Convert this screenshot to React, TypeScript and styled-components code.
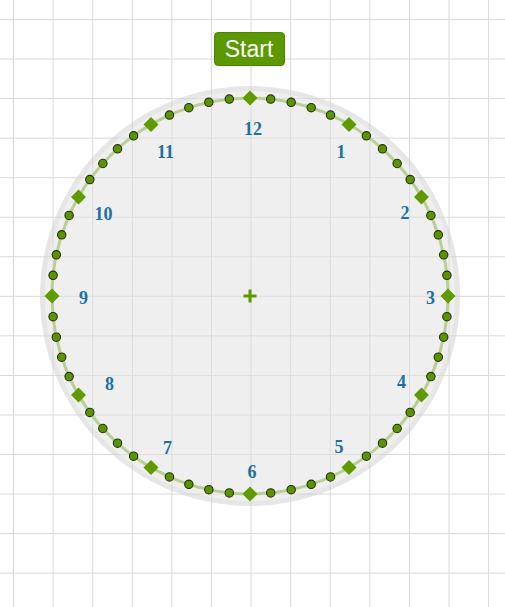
import React from 'react';
import styled, { createGlobalStyle } from 'styled-components';

const SIZE = 430;
const C = SIZE / 2;
const TRACK_R = 198;
const GRID_X = 39.6;
const GRID_Y = 39.55;

// label centres, measured from the clock centre
const LABELS: [number, number, number][] = [
  [12, 3, -167.5],
  [1, 91, -144],
  [2, 155, -83],
  [3, 180.5, 2],
  [4, 151.5, 86],
  [5, 89, 151],
  [6, 2, 175.3],
  [7, -82.5, 152],
  [8, -140.5, 88],
  [9, -166.5, 2],
  [10, -146.5, -82],
  [11, -84.5, -144],
];

const GlobalStyle = createGlobalStyle`
  html, body {
    margin: 0;
    padding: 0;
    background: #ffffff;
    font-family: 'Liberation Sans', Arial, sans-serif;
  }
`;

const polar = (r: number, deg: number) => {
  const a = (deg * Math.PI) / 180;
  return { x: C + r * Math.sin(a), y: C - r * Math.cos(a) };
};

const App = () => {
  const minutes = Array.from({ length: 60 }, (_, i) => i).filter((i) => i % 5 !== 0);
  const hours = Array.from({ length: 12 }, (_, i) => i);

  return (
    <>
      <GlobalStyle />
      <Stage>
        <StartButton type="button">Start</StartButton>
        <ClockFace width={SIZE} height={SIZE} viewBox={`0 0 ${SIZE} ${SIZE}`}>
          <defs>
            <pattern
              id="face-grid"
              patternUnits="userSpaceOnUse"
              x={17.6}
              y={17.1}
              width={GRID_X}
              height={GRID_Y}
            >
              <GridLine x={0} y={0} width={1} height={GRID_Y} />
              <GridLine x={0} y={0} width={GRID_X} height={1} />
            </pattern>
          </defs>
          <Disk cx={C} cy={C} r={210} />
          <circle cx={C} cy={C} r={210} fill="url(#face-grid)" />
          <Rim cx={C} cy={C} r={207.5} />
          <Track cx={C} cy={C} r={TRACK_R} />
          {minutes.map((m) => {
            const p = polar(TRACK_R, m * 6);
            return <MinuteDot key={m} cx={p.x} cy={p.y} r={4.2} />;
          })}
          {hours.map((h) => {
            const p = polar(TRACK_R, h * 30);
            return (
              <HourMarker
                key={h}
                x={p.x - 5.3}
                y={p.y - 5.3}
                width={10.6}
                height={10.6}
                transform={`rotate(45 ${p.x} ${p.y})`}
              />
            );
          })}
          {LABELS.map(([n, dx, dy]) => (
            <HourLabel key={n} x={C + dx} y={C + dy + 6.2}>
              {n}
            </HourLabel>
          ))}
          <CenterMark d={`M ${C - 6.5} ${C} H ${C + 6.5} M ${C} ${C - 6.5} V ${C + 6.5}`} />
        </ClockFace>
      </Stage>
    </>
  );
};

export default App;

const Stage = styled.div`
  box-sizing: border-box;
  width: 100%;
  min-height: 100vh;
  padding: 32px 5px 0 0;
  display: flex;
  flex-direction: column;
  align-items: center;
  background-color: #ffffff;
  background-image: linear-gradient(to right, #d9d9d9 1px, transparent 1px),
    linear-gradient(to bottom, #d9d9d9 1px, transparent 1px);
  background-size: ${GRID_X}px ${GRID_Y}px;
  background-position: 13px 19px;
`;

const StartButton = styled.button`
  box-sizing: border-box;
  width: 71px;
  height: 34px;
  margin-right: 2px;
  padding: 0;
  border: 1px solid #4e8300;
  border-radius: 4px;
  background: #5c9900;
  color: #ffffff;
  font-family: 'Liberation Sans', Arial, sans-serif;
  font-size: 23px;
  line-height: 32px;
  cursor: pointer;
`;

const ClockFace = styled.svg`
  display: block;
  margin-top: 15px;
  overflow: visible;
`;

const GridLine = styled.rect`
  fill: #dcdcdc;
`;

const Disk = styled.circle`
  fill: #efefef;
`;

const Rim = styled.circle`
  fill: none;
  stroke: rgba(0, 0, 0, 0.035);
  stroke-width: 5;
`;

const Track = styled.circle`
  fill: none;
  stroke: #b9cf96;
  stroke-width: 3;
`;

const MinuteDot = styled.circle`
  fill: #5a9400;
  stroke: #24310e;
  stroke-width: 1.1;
`;

const HourMarker = styled.rect`
  fill: #5f9a00;
`;

const HourLabel = styled.text`
  fill: #1d6fa0;
  font-family: 'Liberation Serif', 'Times New Roman', serif;
  font-weight: bold;
  font-size: 18px;
  text-anchor: middle;
`;

const CenterMark = styled.path`
  fill: none;
  stroke: #5a9a00;
  stroke-width: 3;
`;
